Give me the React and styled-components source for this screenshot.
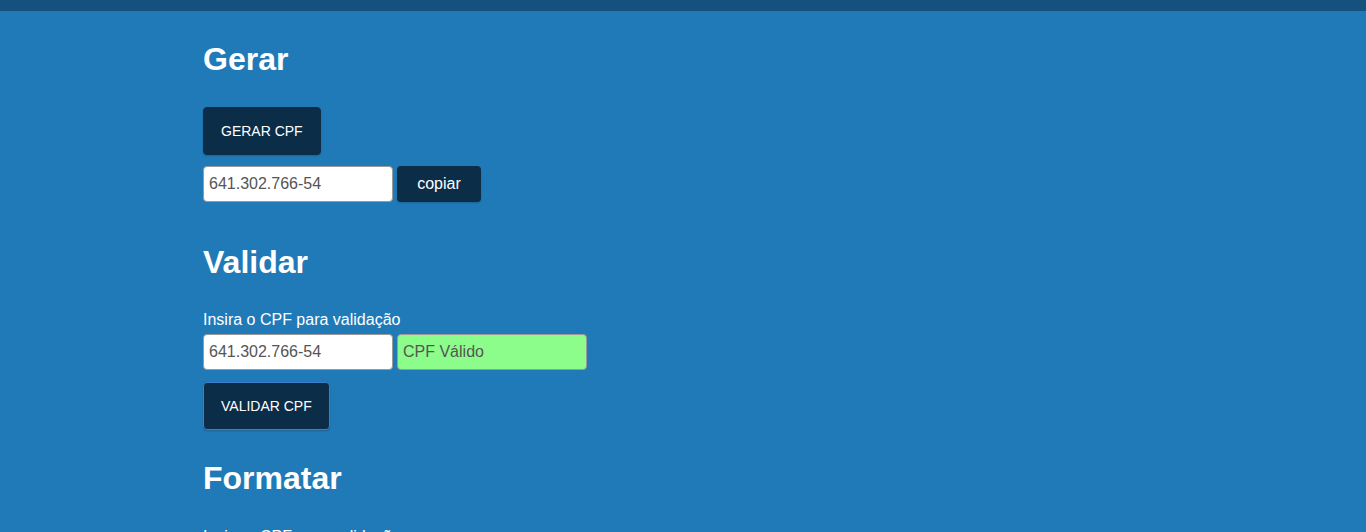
import styled, { createGlobalStyle } from 'styled-components';

const GlobalStyle = createGlobalStyle`
    body {
        margin: 0;
        background: #217ab8;
        font-family: 'Liberation Sans', Arial, sans-serif;
        color: #fff;
    }
`;

const TopBar = styled.div`
    height: 11px;
    background: #16507e;
`;

const Main = styled.main`
    padding: 0 0 40px 203px;
`;

const Section = styled.section`
    display: flex;
    flex-direction: column;
    align-items: flex-start;
`;

const Heading = styled.h2`
    font-size: 32px;
    line-height: 37px;
    font-weight: 700;
    margin: ${props => props.top || '29px'} 0 ${props => props.bottom || '29px'};
`;

const Label = styled.label`
    font-size: 16px;
    line-height: 18px;
    margin-bottom: 5px;
`;

const Row = styled.div`
    display: flex;
    gap: 4px;
    margin-bottom: ${props => props.mb || '0'};
`;

const Input = styled.input`
    box-sizing: border-box;
    width: 190px;
    height: 36px;
    padding: 0 5px;
    border: 1px solid #9a9a9a;
    border-radius: 4px;
    font-family: 'Liberation Sans', Arial, sans-serif;
    font-size: 16px;
    color: #555;
    background: ${props => props.ok ? '#8cfd8a' : '#fff'};
    outline: none;
`;

const BigButton = styled.button`
    box-sizing: border-box;
    height: 48px;
    padding: 0 17px;
    border: 1px solid ${props => props.focused ? '#3a7fd0' : '#0c2d48'};
    border-radius: 4px;
    background: #0c2d48;
    color: #fff;
    font-family: 'Liberation Sans', Arial, sans-serif;
    font-size: 14px;
    margin-bottom: ${props => props.mb || '0'};
    box-shadow: 0 1px 2px rgba(0,0,0,0.2);
`;

const SmallButton = styled.button`
    box-sizing: border-box;
    width: 84px;
    height: 36px;
    border: none;
    border-radius: 4px;
    background: #0c2d48;
    color: #fff;
    font-family: 'Liberation Sans', Arial, sans-serif;
    font-size: 16px;
    box-shadow: 0 1px 2px rgba(0,0,0,0.2);
`;

const App = () => {
    return (
        <>
            <GlobalStyle />
            <TopBar />
            <Main>
                <Section>
                    <Heading top="30px">Gerar</Heading>
                    <BigButton mb="11px">GERAR CPF</BigButton>
                    <Row>
                        <Input defaultValue="641.302.766-54" />
                        <SmallButton>copiar</SmallButton>
                    </Row>
                </Section>

                <Section>
                    <Heading top="42px" bottom="30px">Validar</Heading>
                    <Label>Insira o CPF para validação</Label>
                    <Row mb="12px">
                        <Input defaultValue="641.302.766-54" />
                        <Input ok defaultValue="CPF Válido" readOnly />
                    </Row>
                    <BigButton focused>VALIDAR CPF</BigButton>
                </Section>

                <Section>
                    <Heading top="30px" bottom="31px">Formatar</Heading>
                    <Label>Insira o CPF para validação</Label>
                    <Row>
                        <Input />
                    </Row>
                </Section>
            </Main>
        </>
    );
};

export default App;
